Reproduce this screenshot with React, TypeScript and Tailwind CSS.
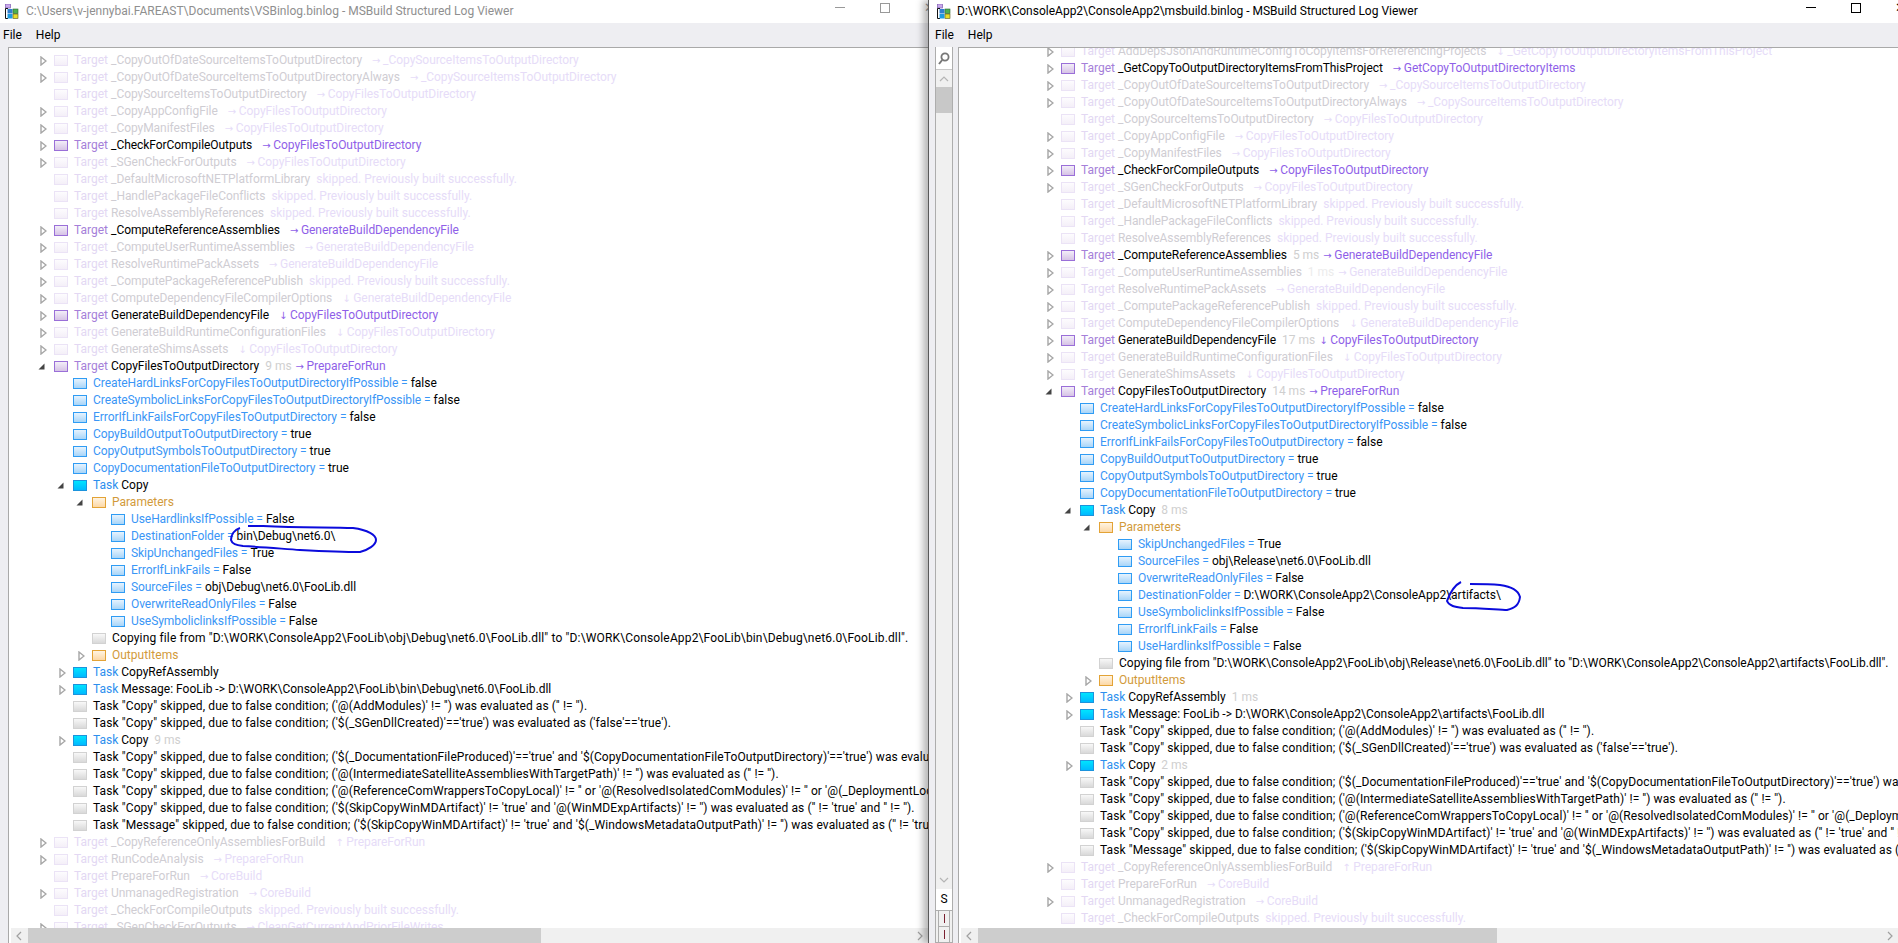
import React from 'react';

type Kind = 'target' | 'faded' | 'prop' | 'task' | 'folder' | 'msg';
type Row = {
  l: number;
  k: Kind;
  exp?: 'c' | 'o';
  label?: string;
  name: string;
  ms?: string;
  tail?: string;
  value?: string;
};

const ICON: Record<Kind, string> = {
  target: 'border-[#9a6fd8] bg-linear-to-b from-[#f3eef8] to-[#d6c3e6]',
  faded: 'border-[#ebe3f6] bg-linear-to-b from-[#fdfcfe] to-[#f4eff8]',
  prop: 'border-[#2f9cf4] bg-linear-to-b from-[#e6f3fe] to-[#a8d5f8]',
  task: 'border-[#1c93dc] bg-linear-to-b from-[#00e4ff] to-[#00b9ff]',
  folder: 'border-[#e3a336] bg-linear-to-b from-[#fff4e2] to-[#fcd8a6]',
  msg: 'border-[#d2d2d2] bg-linear-to-b from-[#f8f8f8] to-[#d9d9d9]',
};

const LEFT_PAD = ['pl-[27px]', 'pl-[46px]', 'pl-[65px]', 'pl-[84px]'];
const RIGHT_PAD = ['pl-[84px]', 'pl-[103px]', 'pl-[122px]', 'pl-[141px]'];

const CF = '→ CopyFilesToOutputDirectory';
const GB = '→ GenerateBuildDependencyFile';
const SK = 'skipped. Previously built successfully.';

const fade = (name: string, tail: string, exp = true): Row => ({ l: 0, k: 'faded', label: 'Target', name, tail, exp: exp ? 'c' : undefined });
const active = (name: string, tail: string, ms?: string, exp: 'c' | 'o' = 'c'): Row => ({ l: 0, k: 'target', label: 'Target', name, tail, ms, exp });
const prop = (l: number, name: string, value: string): Row => ({ l, k: 'prop', name, value });
const task = (name: string, ms?: string, exp: 'c' | 'o' = 'c'): Row => ({ l: 1, k: 'task', label: 'Task', name, ms, exp });
const msg = (l: number, name: string): Row => ({ l, k: 'msg', name });
const folder = (name: string, exp: 'c' | 'o'): Row => ({ l: 2, k: 'folder', name, exp });

const copyProps = [
  prop(1, 'CreateHardLinksForCopyFilesToOutputDirectoryIfPossible', 'false'),
  prop(1, 'CreateSymbolicLinksForCopyFilesToOutputDirectoryIfPossible', 'false'),
  prop(1, 'ErrorIfLinkFailsForCopyFilesToOutputDirectory', 'false'),
  prop(1, 'CopyBuildOutputToOutputDirectory', 'true'),
  prop(1, 'CopyOutputSymbolsToOutputDirectory', 'true'),
  prop(1, 'CopyDocumentationFileToOutputDirectory', 'true'),
];

const skip1 = [
  msg(1, `Task "Copy" skipped, due to false condition; ('@(AddModules)' != '') was evaluated as ('' != '').`),
  msg(1, `Task "Copy" skipped, due to false condition; ('$(_SGenDllCreated)'=='true') was evaluated as ('false'=='true').`),
];
const skip2 = [
  msg(1, `Task "Copy" skipped, due to false condition; ('$(_DocumentationFileProduced)'=='true' and '$(CopyDocumentationFileToOutputDirectory)'=='true') was evaluated as ('true'=='true' and 'true'=='true').`),
  msg(1, `Task "Copy" skipped, due to false condition; ('@(IntermediateSatelliteAssembliesWithTargetPath)' != '') was evaluated as ('' != '').`),
  msg(1, `Task "Copy" skipped, due to false condition; ('@(ReferenceComWrappersToCopyLocal)' != '' or '@(ResolvedIsolatedComModules)' != '' or '@(_DeploymentLooseManifestFile)' != '') was evaluated as ('' != '').`),
  msg(1, `Task "Copy" skipped, due to false condition; ('$(SkipCopyWinMDArtifact)' != 'true' and '@(WinMDExpArtifacts)' != '') was evaluated as ('' != 'true' and '' != '').`),
  msg(1, `Task "Message" skipped, due to false condition; ('$(SkipCopyWinMDArtifact)' != 'true' and '$(_WindowsMetadataOutputPath)' != '') was evaluated as ('' != 'true' and '' != '').`),
];

const leftRows: Row[] = [
  fade('_CopyOutOfDateSourceItemsToOutputDirectory', '→ _CopySourceItemsToOutputDirectory'),
  fade('_CopyOutOfDateSourceItemsToOutputDirectoryAlways', '→ _CopySourceItemsToOutputDirectory'),
  fade('_CopySourceItemsToOutputDirectory', CF, false),
  fade('_CopyAppConfigFile', CF),
  fade('_CopyManifestFiles', CF),
  active('_CheckForCompileOutputs', CF),
  fade('_SGenCheckForOutputs', CF),
  fade('_DefaultMicrosoftNETPlatformLibrary', SK, false),
  fade('_HandlePackageFileConflicts', SK, false),
  fade('ResolveAssemblyReferences', SK, false),
  active('_ComputeReferenceAssemblies', GB),
  fade('_ComputeUserRuntimeAssemblies', GB),
  fade('ResolveRuntimePackAssets', GB),
  fade('_ComputePackageReferencePublish', SK),
  fade('ComputeDependencyFileCompilerOptions', '↓ GenerateBuildDependencyFile'),
  active('GenerateBuildDependencyFile', '↓ CopyFilesToOutputDirectory'),
  fade('GenerateBuildRuntimeConfigurationFiles', '↓ CopyFilesToOutputDirectory'),
  fade('GenerateShimsAssets', '↓ CopyFilesToOutputDirectory'),
  active('CopyFilesToOutputDirectory', '→ PrepareForRun', '9 ms', 'o'),
  ...copyProps,
  task('Copy', undefined, 'o'),
  folder('Parameters', 'o'),
  prop(3, 'UseHardlinksIfPossible', 'False'),
  prop(3, 'DestinationFolder', 'bin\\Debug\\net6.0\\'),
  prop(3, 'SkipUnchangedFiles', 'True'),
  prop(3, 'ErrorIfLinkFails', 'False'),
  prop(3, 'SourceFiles', 'obj\\Debug\\net6.0\\FooLib.dll'),
  prop(3, 'OverwriteReadOnlyFiles', 'False'),
  prop(3, 'UseSymboliclinksIfPossible', 'False'),
  msg(2, 'Copying file from "D:\\WORK\\ConsoleApp2\\FooLib\\obj\\Debug\\net6.0\\FooLib.dll" to "D:\\WORK\\ConsoleApp2\\FooLib\\bin\\Debug\\net6.0\\FooLib.dll".'),
  folder('OutputItems', 'c'),
  task('CopyRefAssembly'),
  task('Message: FooLib -> D:\\WORK\\ConsoleApp2\\FooLib\\bin\\Debug\\net6.0\\FooLib.dll'),
  ...skip1,
  task('Copy', '9 ms'),
  ...skip2,
  fade('_CopyReferenceOnlyAssembliesForBuild', '↑ PrepareForRun'),
  fade('RunCodeAnalysis', '→ PrepareForRun'),
  fade('PrepareForRun', '→ CoreBuild', false),
  fade('UnmanagedRegistration', '→ CoreBuild'),
  fade('_CheckForCompileOutputs', SK, false),
  fade('_SGenCheckForOutputs', '→ CleanGetCurrentAndPriorFileWrites'),
];

const rightRows: Row[] = [
  fade('AddDepsJsonAndRuntimeConfigToCopyItemsForReferencingProjects', '↓ _GetCopyToOutputDirectoryItemsFromThisProject'),
  active('_GetCopyToOutputDirectoryItemsFromThisProject', '→ GetCopyToOutputDirectoryItems'),
  fade('_CopyOutOfDateSourceItemsToOutputDirectory', '→ _CopySourceItemsToOutputDirectory'),
  fade('_CopyOutOfDateSourceItemsToOutputDirectoryAlways', '→ _CopySourceItemsToOutputDirectory'),
  fade('_CopySourceItemsToOutputDirectory', CF, false),
  fade('_CopyAppConfigFile', CF),
  fade('_CopyManifestFiles', CF),
  active('_CheckForCompileOutputs', CF),
  fade('_SGenCheckForOutputs', CF),
  fade('_DefaultMicrosoftNETPlatformLibrary', SK, false),
  fade('_HandlePackageFileConflicts', SK, false),
  fade('ResolveAssemblyReferences', SK, false),
  active('_ComputeReferenceAssemblies', GB, '5 ms'),
  { ...fade('_ComputeUserRuntimeAssemblies', GB), ms: '1 ms' },
  fade('ResolveRuntimePackAssets', GB),
  fade('_ComputePackageReferencePublish', SK),
  fade('ComputeDependencyFileCompilerOptions', '↓ GenerateBuildDependencyFile'),
  active('GenerateBuildDependencyFile', '↓ CopyFilesToOutputDirectory', '17 ms'),
  fade('GenerateBuildRuntimeConfigurationFiles', '↓ CopyFilesToOutputDirectory'),
  fade('GenerateShimsAssets', '↓ CopyFilesToOutputDirectory'),
  active('CopyFilesToOutputDirectory', '→ PrepareForRun', '14 ms', 'o'),
  ...copyProps,
  task('Copy', '8 ms', 'o'),
  folder('Parameters', 'o'),
  prop(3, 'SkipUnchangedFiles', 'True'),
  prop(3, 'SourceFiles', 'obj\\Release\\net6.0\\FooLib.dll'),
  prop(3, 'OverwriteReadOnlyFiles', 'False'),
  prop(3, 'DestinationFolder', 'D:\\WORK\\ConsoleApp2\\ConsoleApp2\\artifacts\\'),
  prop(3, 'UseSymboliclinksIfPossible', 'False'),
  prop(3, 'ErrorIfLinkFails', 'False'),
  prop(3, 'UseHardlinksIfPossible', 'False'),
  msg(2, 'Copying file from "D:\\WORK\\ConsoleApp2\\FooLib\\obj\\Release\\net6.0\\FooLib.dll" to "D:\\WORK\\ConsoleApp2\\ConsoleApp2\\artifacts\\FooLib.dll".'),
  folder('OutputItems', 'c'),
  task('CopyRefAssembly', '1 ms'),
  task('Message: FooLib -> D:\\WORK\\ConsoleApp2\\ConsoleApp2\\artifacts\\FooLib.dll'),
  ...skip1,
  task('Copy', '2 ms'),
  ...skip2,
  fade('_CopyReferenceOnlyAssembliesForBuild', '↑ PrepareForRun'),
  fade('PrepareForRun', '→ CoreBuild', false),
  fade('UnmanagedRegistration', '→ CoreBuild'),
  fade('_CheckForCompileOutputs', SK, false),
];

function Expander({ exp }: { exp?: 'c' | 'o' }) {
  return (
    <span className="flex w-[18px] shrink-0 items-center">
      {exp === 'c' && (
        <svg width="7" height="10" viewBox="0 0 7 10" className="ml-[4px]">
          <path d="M1 1 L6 5 L1 9 Z" fill="#fff" stroke="#a6a6a6" strokeWidth="1.4" />
        </svg>
      )}
      {exp === 'o' && (
        <svg width="7" height="7" viewBox="0 0 7 7" className="ml-[2px]">
          <path d="M6.5 0.5 V6.5 H0.5 Z" fill="#444" />
        </svg>
      )}
    </span>
  );
}

function Tail({ row, faded }: { row: Row; faded: boolean }) {
  const tail = row.tail as string;
  const color = faded ? 'text-[#e6dcf8]' : 'text-[#8f5fe8]';
  if (tail === SK) return <span className={`ml-[6px] ${color}`}>{tail}</span>;
  return (
    <span className={`${row.ms ? 'ml-[4px]' : 'ml-[10px]'} flex items-center tracking-[-0.05px] ${color}`}>
      <span className="w-[11px] shrink-0 [font-family:'DejaVu_Sans',sans-serif] text-[10px]">{tail.slice(0, 1)}</span>
      <span>{tail.slice(2)}</span>
    </span>
  );
}

function TreeRow({ row, pad }: { row: Row; pad: string[] }) {
  const isFaded = row.k === 'faded';
  const wideMsg = row.name.startsWith('Copying') && row.name.includes('bin\\Debug');
  const plainCopy = row.name.startsWith('Copying') && !wideMsg;
  return (
    <div className={`flex h-[17px] items-center whitespace-nowrap ${pad[row.l]}`}>
      <Expander exp={row.exp} />
      <span className={`mr-[6px] h-[11px] w-[14px] shrink-0 border ${ICON[row.k]}`} />
      {row.label === 'Target' && <span className={isFaded ? 'mr-[3px] text-[#e3d8f3]' : 'mr-[3px] text-[#a57fd9]'}>Target</span>}
      {row.label === 'Task' && <span className="mr-[3px] text-[#2d8fee]">Task</span>}
      {row.k === 'prop' && (
        <>
          <span className="tracking-[-0.07px] text-[#3a96f6]">{row.name} =</span>
          <span className="ml-[3px] text-black">{row.value}</span>
        </>
      )}
      {row.k === 'folder' && <span className="text-[#d29a3a]">{row.name}</span>}
      {row.k === 'target' && <span className="tracking-[-0.05px] text-black">{row.name}</span>}
      {row.k === 'task' && <span className="text-black">{row.name}</span>}
      {row.k === 'msg' && (
        <span className={wideMsg ? 'tracking-[0.15px] text-black' : plainCopy ? 'text-black' : 'tracking-[0.1px] text-black'}>{row.name}</span>
      )}
      {isFaded && <span className="tracking-[-0.05px] text-[#cfcdd3]">{row.name}</span>}
      {row.ms && <span className={isFaded ? 'ml-[6px] text-[#ececec]' : 'ml-[6px] text-[#cfcfcf]'}>{row.ms}</span>}
      {row.tail && <Tail row={row} faded={isFaded} />}
    </div>
  );
}

function AppIcon() {
  return (
    <svg width="14" height="16" viewBox="0 0 14 16" className="shrink-0">
      <rect x="0.5" y="0" width="5" height="4" fill="#c9a8ec" stroke="#7d5cb0" strokeWidth="0.7" />
      <path d="M3 4.5 H0.5 V14.5 H3" fill="none" stroke="#111" strokeWidth="1" />
      <rect x="2.5" y="5" width="5" height="4.5" fill="#2f7fd0" />
      <rect x="8" y="5" width="5" height="4.5" fill="#4cb050" stroke="#2d6a30" strokeWidth="0.6" />
      <rect x="2.5" y="10" width="5" height="4.5" fill="#1c9be0" />
      <rect x="8" y="10" width="5" height="4.5" fill="#e6dc2c" stroke="#55551a" strokeWidth="0.6" />
    </svg>
  );
}

function Controls({ dim, margin }: { dim: boolean; margin: string }) {
  const bg = dim ? 'bg-[#999]' : 'bg-black';
  const border = dim ? 'border-[#999]' : 'border-black';
  return (
    <div className={`ml-auto flex h-full items-start ${margin}`}>
      <div className="flex h-[15px] w-[45px] items-center justify-center">
        <span className={`h-px w-[10px] ${bg}`} />
      </div>
      <div className="flex h-[15px] w-[45px] items-center justify-center">
        <span className={`h-[10px] w-[10px] border ${border}`} />
      </div>
      <div className={`flex h-[15px] w-[45px] items-center justify-center text-[13px] ${dim ? 'text-[#999]' : 'text-black'}`}>✕</div>
    </div>
  );
}

function Chevron({ dir, tone = '#a0a0a0' }: { dir: 'l' | 'r' | 'u' | 'd'; tone?: string }) {
  const d = { l: 'M6 1 L2 5 L6 9', r: 'M3 1 L7 5 L3 9', u: 'M1 7 L5 3 L9 7', d: 'M1 3 L5 7 L9 3' }[dir];
  return (
    <svg width="10" height="10" viewBox="0 0 10 10" className="shrink-0">
      <path d={d} fill="none" stroke={tone} strokeWidth="1.2" />
    </svg>
  );
}

function HScroll({ thumb, margin }: { thumb: string; margin: string }) {
  return (
    <div className={`flex h-[15px] shrink-0 items-center bg-[#f0f0f0] ${margin}`}>
      <div className="flex h-full w-[17px] shrink-0 items-center justify-center">
        <Chevron dir="l" />
      </div>
      <div className={`h-full shrink-0 bg-[#cdcdcd] ${thumb}`} />
      <div className="ml-auto flex h-full w-[17px] shrink-0 items-center justify-center">
        <Chevron dir="r" />
      </div>
    </div>
  );
}

function SearchRail() {
  return (
    <div className="ml-[6px] mr-[5px] flex w-[18px] shrink-0 flex-col border border-t-0 border-[#adadad] bg-[#f0f0f0]">
      <div className="flex h-[23px] shrink-0 items-center justify-center border-b border-[#c8c8c8] bg-white">
        <svg width="12" height="13" viewBox="0 0 12 13">
          <circle cx="7" cy="5" r="3.6" fill="none" stroke="#777" strokeWidth="1.8" />
          <path d="M4.2 8 L1 12" stroke="#777" strokeWidth="2" />
        </svg>
      </div>
      <div className="flex h-[17px] shrink-0 items-center justify-center">
        <Chevron dir="u" tone="#b5b5b5" />
      </div>
      <div className="h-[26px] shrink-0 bg-[#c8c8c8]" />
      <div className="flex flex-1 items-end justify-center pb-[4px]">
        <Chevron dir="d" tone="#b5b5b5" />
      </div>
      <div className="-mx-px flex h-[22px] shrink-0 items-center justify-center border-x border-b border-[#adadad] bg-white text-[12px] text-black">S</div>
      <div className="mx-[2px] flex h-[16px] shrink-0 items-center justify-center border-x border-b border-[#adadad]">
        <span className="h-[9px] w-px bg-[#7a2030]" />
      </div>
      <div className="mx-[2px] flex h-[15px] shrink-0 items-center justify-center border-x border-[#adadad]">
        <span className="h-[9px] w-px bg-[#7a2030]" />
      </div>
    </div>
  );
}

function LeftWindow() {
  return (
    <div className="flex h-full w-[928px] shrink-0 flex-col overflow-hidden">
      <div className="flex h-[23px] shrink-0 items-center bg-white pl-[5px] text-[#8f8f8f]">
        <AppIcon />
        <span className="ml-[7px]">C:\Users\v-jennybai.FAREAST\Documents\VSBinlog.binlog - MSBuild Structured Log Viewer</span>
        <Controls dim margin="-mr-[24px]" />
      </div>
      <div className="flex h-[24px] shrink-0 items-center gap-[14px] bg-[#eeeef2] pl-[3px] text-black">
        <span>File</span>
        <span>Help</span>
      </div>
      <div className="flex min-h-0 flex-1 bg-[#eeeef2]">
        <div className="w-[8px] shrink-0" />
        <div className="flex min-w-0 flex-1 flex-col border-l border-t border-[#a9a9a9] bg-white">
          <div className="min-h-0 flex-1 overflow-hidden pt-[4px]">
            {leftRows.map((row, i) => (
              <TreeRow key={i} row={row} pad={LEFT_PAD} />
            ))}
          </div>
          <HScroll thumb="w-[513px]" margin="ml-[2px]" />
        </div>
      </div>
    </div>
  );
}

function RightWindow() {
  return (
    <div className="relative z-10 flex h-full min-w-0 flex-1 flex-col overflow-hidden border-l border-[#5a5a5a] shadow-[-5px_0_7px_rgba(0,0,0,0.28)]">
      <div className="flex h-[23px] shrink-0 items-center bg-white pl-[8px] text-black">
        <AppIcon />
        <span className="ml-[6px]">D:\WORK\ConsoleApp2\ConsoleApp2\msbuild.binlog - MSBuild Structured Log Viewer</span>
        <Controls dim={false} margin="-mr-[25px]" />
      </div>
      <div className="flex h-[24px] shrink-0 items-center gap-[14px] bg-[#eeeef2] pl-[6px] text-black">
        <span>File</span>
        <span>Help</span>
      </div>
      <div className="flex min-h-0 flex-1 bg-[#eeeef2]">
        <SearchRail />
        <div className="flex min-w-0 flex-1 flex-col border-l border-t border-[#a9a9a9] bg-white">
          <div className="min-h-0 flex-1 overflow-hidden">
            <div className="-mt-[5px]">
              {rightRows.map((row, i) => (
                <TreeRow key={i} row={row} pad={RIGHT_PAD} />
              ))}
            </div>
          </div>
          <HScroll thumb="w-[519px]" margin="ml-[2px]" />
        </div>
      </div>
    </div>
  );
}

export default function App() {
  return (
    <div className="relative flex h-[943px] w-[1898px] overflow-hidden bg-white text-[12px] leading-[17px] [font-family:Roboto,sans-serif]">
      <LeftWindow />
      <RightWindow />
      {/* pen marks over the two destination folders */}
      <svg viewBox="0 0 1898 943" className="pointer-events-none absolute inset-0 z-20 h-full w-full">
        <path
          d="M240 528 C234 530 231 535 231 540 C232 544 236 545 243 546 C262 547 285 549 300 550 C320 551 345 552 360 552 C368 550 376 545 376 540 C376 535 368 530 353 528 C330 527 300 528 263 526 C256 526 252 526 248 526"
          fill="none"
          stroke="#0b0bdc"
          strokeWidth="2"
        />
        <path
          d="M1461 582 C1455 585 1451 590 1447 601 C1449 606 1455 607 1463 608 C1480 608 1500 610 1507 610 C1515 608 1519 605 1520 597 C1518 590 1512 587 1500 585 C1490 584 1478 584 1470 584"
          fill="none"
          stroke="#0b0bdc"
          strokeWidth="2"
        />
      </svg>
    </div>
  );
}
